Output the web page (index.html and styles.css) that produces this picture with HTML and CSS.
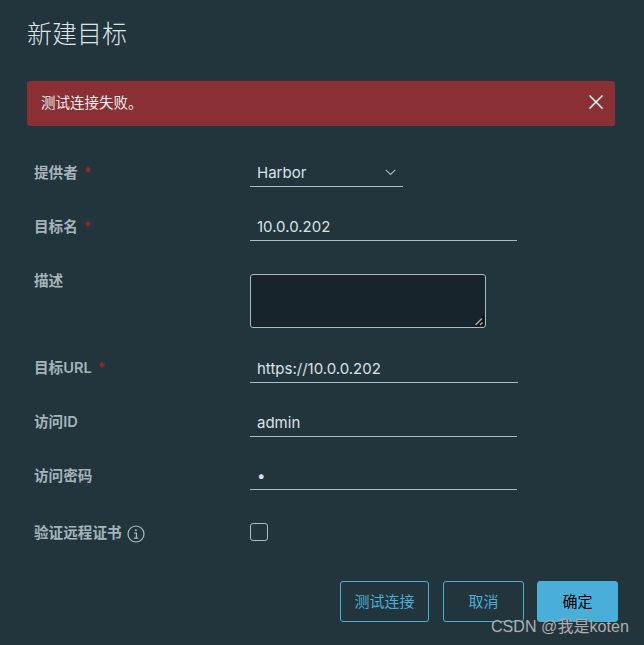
FILE: index.html
```html
<!DOCTYPE html>
<html lang="zh">
<head>
<meta charset="utf-8">
<title>新建目标</title>
<link rel="stylesheet" href="styles.css">
</head>
<body>
<main class="dialog">
  <h1 class="title">新建目标</h1>
  <div class="alert">
    <span class="alert-text">测试连接失败。</span>
    <svg class="alert-close" width="16" height="16" viewBox="0 0 16 16"><path d="M1.5 1.5 14.5 14.5M14.5 1.5 1.5 14.5" stroke="#fff" stroke-width="1.5" fill="none"/></svg>
  </div>
  <form class="form">
    <div class="row">
      <label class="label label-low">提供者<span class="req">*</span></label>
      <div class="select">
        <span>Harbor</span>
        <svg width="11" height="7" viewBox="0 0 11 7"><path d="M.7.9 5.5 5.5 10.3.9" stroke="#a9b6be" stroke-width="1.1" fill="none"/></svg>
      </div>
    </div>
    <div class="row row-name">
      <label class="label label-low">目标名<span class="req">*</span></label>
      <input class="input" value="10.0.0.202">
    </div>
    <div class="row row-desc">
      <label class="label label-top">描述</label>
      <div class="textarea-wrap">
        <textarea class="textarea"></textarea>
        <svg class="grip" width="11" height="11" viewBox="0 0 11 11"><path d="M11 0V11H0Z" fill="#0c1216"/><path d="M2.5 10 9 3.5M7 10 9.5 7.5" stroke="#a8a8a8" stroke-width="1.6" fill="none"/></svg>
      </div>
    </div>
    <div class="row row-url">
      <label class="label">目标URL<span class="req">*</span></label>
      <input class="input input-wide" value="https://10.0.0.202">
    </div>
    <div class="row row-id">
      <label class="label">访问ID</label>
      <input class="input" value="admin">
    </div>
    <div class="row row-pass">
      <label class="label label-low">访问密码</label>
      <input class="input" type="password" value="a">
    </div>
    <div class="row row-check">
      <label class="label">验证远程证书
        <svg class="info" width="18" height="18" viewBox="0 0 18 18"><circle cx="9" cy="9" r="8" stroke="#adbbc4" stroke-width="1.2" fill="none"/><path d="M7 8h2.4v5M6.8 13.2h4.6" stroke="#adbbc4" stroke-width="1.2" fill="none"/><circle cx="8.9" cy="5.3" r="1" fill="#adbbc4"/></svg>
      </label>
      <span class="checkbox"></span>
    </div>
  </form>
  <div class="actions">
    <button class="btn btn-test" type="button">测试连接</button>
    <button class="btn btn-cancel" type="button">取消</button>
    <button class="btn btn-primary" type="button">确定</button>
  </div>
</main>
<div class="watermark">CSDN @我是koten</div>
</body>
</html>
```
FILE: styles.css
```css
* { box-sizing: border-box; }
html, body { margin: 0; height: 100%; }
body {
  background: #22343c;
  font-family: Inter, "Noto Sans CJK SC", sans-serif;
  overflow: hidden;
  position: relative;
}
.dialog { padding: 19px 26px 0 27px; }
.title {
  margin: 0;
  font-size: 25px;
  line-height: 30px;
  font-weight: 300;
  color: #dfe5e8;
}
.alert {
  margin: 32px 3px 0 0;
  height: 45px;
  background: #8a2f34;
  border-radius: 3px;
  display: flex;
  align-items: center;
  justify-content: space-between;
  padding: 0 11px 0 14px;
}
.alert-text { font-size: 14.5px; color: #ececec; margin-top: -5px; }
.alert-close { margin-top: -4px; }
.form { padding-left: 7px; margin-top: 36px; }
.row { display: flex; align-items: flex-start; }
.row-name { margin-top: 29px; }
.row-desc { margin-top: 33px; }
.row-url { margin-top: 30px; }
.row-id { margin-top: 29px; }
.row-pass { margin-top: 28px; }
.row-check { margin-top: 33px; align-items: center; }
.label {
  width: 216px;
  flex: none;
  font-size: 14.6px;
  font-weight: 600;
  line-height: 20px;
  color: #a5b4ba;
  display: flex;
  align-items: center;
}
.label-low { margin-top: 1px; }
.label-top { margin-top: -3px; }
.req { color: #a3241c; margin-left: 6px; font-size: 14px; }
.info { margin-left: 5px; margin-top: 2px; }
.select, .input {
  height: 25px;
  background: transparent;
  border: 0;
  border-bottom: 1px solid #adbbc4;
  color: #dbe2e6;
  font: 400 15px Inter, "Noto Sans CJK SC", sans-serif;
  padding: 0 0 4px 7px;
  outline: 0;
}
.select {
  width: 153px;
  display: flex;
  align-items: center;
  justify-content: space-between;
  padding-right: 7px;
}
.input { width: 267px; }
.input-wide { width: 268px; }
.textarea-wrap { position: relative; width: 236px; height: 54px; }
.textarea {
  display: block;
  width: 236px;
  height: 54px;
  background: #17242b;
  border: 1px solid #adbbc4;
  border-radius: 3px;
  outline: 0;
  margin: 0;
  resize: none;
}
.grip { position: absolute; right: 2px; bottom: 2px; }
.checkbox {
  width: 18px;
  height: 18px;
  border: 1px solid #adbbc4;
  border-radius: 3px;
  margin-top: -2px;
}
.actions {
  position: absolute;
  top: 581px;
  right: 26px;
  display: flex;
  gap: 13px;
}
.btn {
  height: 41px;
  width: 81px;
  border-radius: 3px;
  border: 1px solid #49afd9;
  background: transparent;
  color: #49afd9;
  font: 400 15px Inter, "Noto Sans CJK SC", sans-serif;
  padding: 0 0 3px;
}
.btn-test { width: 89px; margin-right: 1px; }
.btn-primary { background: #49afd9; color: #000; }
.watermark {
  position: absolute;
  left: 491px;
  top: 617px;
  font: 400 16px/20px "Liberation Sans", "Noto Sans CJK SC", sans-serif;
  letter-spacing: 0.06px;
  color: #a9b1b4;
  text-shadow: 1px 1px 1px #33393c;
  white-space: nowrap;
}
```
